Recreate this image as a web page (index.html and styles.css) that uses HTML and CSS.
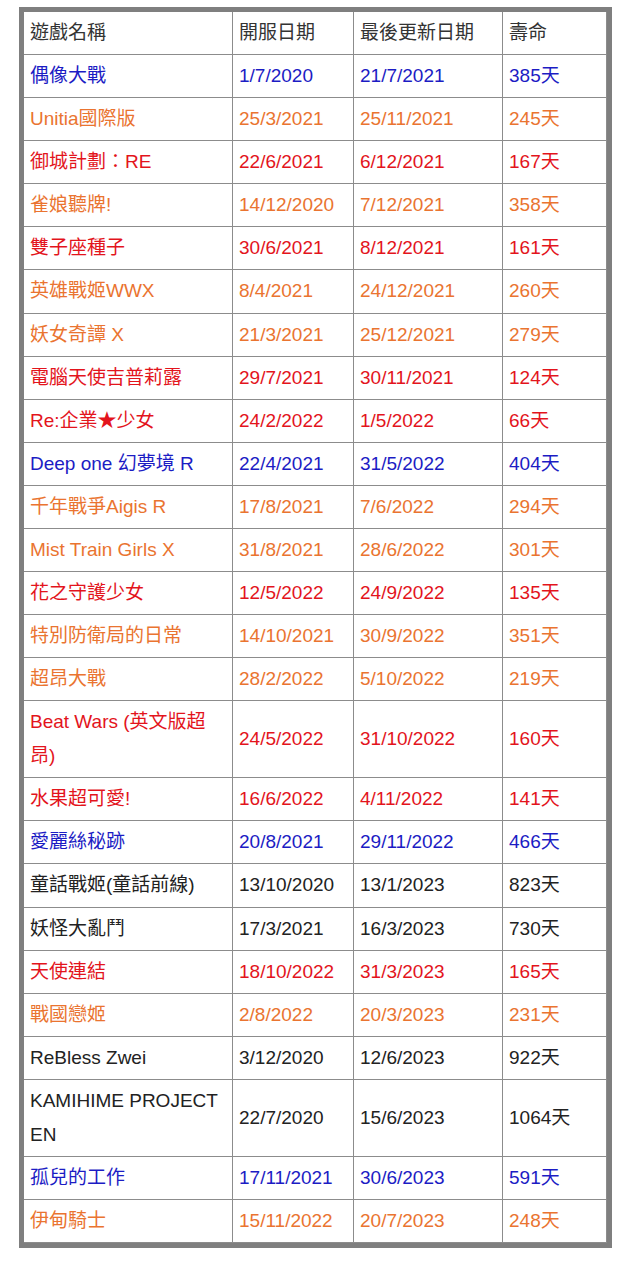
FILE: index.html
```html
<!DOCTYPE html>
<html lang="zh-Hant">
<head>
<meta charset="utf-8">
<title>遊戲壽命</title>
<link rel="stylesheet" href="styles.css">
</head>
<body>
<div class="frame">
<table class="games">
<colgroup>
<col class="c1"><col class="c2"><col class="c3"><col class="c4">
</colgroup>
<thead>
<tr class="k"><th>遊戲名稱</th><th>開服日期</th><th>最後更新日期</th><th>壽命</th></tr>
</thead>
<tbody>
<tr class="b"><td>偶像大戰</td><td>1/7/2020</td><td>21/7/2021</td><td>385天</td></tr>
<tr class="o"><td>Unitia國際版</td><td>25/3/2021</td><td>25/11/2021</td><td>245天</td></tr>
<tr class="r"><td>御城計劃：RE</td><td>22/6/2021</td><td>6/12/2021</td><td>167天</td></tr>
<tr class="o"><td>雀娘聽牌!</td><td>14/12/2020</td><td>7/12/2021</td><td>358天</td></tr>
<tr class="r"><td>雙子座種子</td><td>30/6/2021</td><td>8/12/2021</td><td>161天</td></tr>
<tr class="o"><td>英雄戰姬WWX</td><td>8/4/2021</td><td>24/12/2021</td><td>260天</td></tr>
<tr class="o"><td>妖女奇譚 X</td><td>21/3/2021</td><td>25/12/2021</td><td>279天</td></tr>
<tr class="r"><td>電腦天使吉普莉露</td><td>29/7/2021</td><td>30/11/2021</td><td>124天</td></tr>
<tr class="r"><td>Re:企業★少女</td><td>24/2/2022</td><td>1/5/2022</td><td>66天</td></tr>
<tr class="b"><td>Deep one 幻夢境 R</td><td>22/4/2021</td><td>31/5/2022</td><td>404天</td></tr>
<tr class="o"><td>千年戰爭Aigis R</td><td>17/8/2021</td><td>7/6/2022</td><td>294天</td></tr>
<tr class="o"><td>Mist Train Girls X</td><td>31/8/2021</td><td>28/6/2022</td><td>301天</td></tr>
<tr class="r"><td>花之守護少女</td><td>12/5/2022</td><td>24/9/2022</td><td>135天</td></tr>
<tr class="o"><td>特別防衛局的日常</td><td>14/10/2021</td><td>30/9/2022</td><td>351天</td></tr>
<tr class="o"><td>超昂大戰</td><td>28/2/2022</td><td>5/10/2022</td><td>219天</td></tr>
<tr class="r"><td>Beat Wars (英文版超昂)</td><td>24/5/2022</td><td>31/10/2022</td><td>160天</td></tr>
<tr class="r"><td>水果超可愛!</td><td>16/6/2022</td><td>4/11/2022</td><td>141天</td></tr>
<tr class="b"><td>愛麗絲秘跡</td><td>20/8/2021</td><td>29/11/2022</td><td>466天</td></tr>
<tr class="k"><td>童話戰姬(童話前線)</td><td>13/10/2020</td><td>13/1/2023</td><td>823天</td></tr>
<tr class="k"><td>妖怪大亂鬥</td><td>17/3/2021</td><td>16/3/2023</td><td>730天</td></tr>
<tr class="r"><td>天使連結</td><td>18/10/2022</td><td>31/3/2023</td><td>165天</td></tr>
<tr class="o"><td>戰國戀姬</td><td>2/8/2022</td><td>20/3/2023</td><td>231天</td></tr>
<tr class="k"><td>ReBless Zwei</td><td>3/12/2020</td><td>12/6/2023</td><td>922天</td></tr>
<tr class="k"><td>KAMIHIME PROJECT EN</td><td>22/7/2020</td><td>15/6/2023</td><td>1064天</td></tr>
<tr class="b"><td>孤兒的工作</td><td>17/11/2021</td><td>30/6/2023</td><td>591天</td></tr>
<tr class="o"><td>伊甸騎士</td><td>15/11/2022</td><td>20/7/2023</td><td>248天</td></tr>
</tbody>
</table>
</div>
</body>
</html>
```
FILE: styles.css
```css
html, body {
  margin: 0;
  padding: 0;
  background: #ffffff;
}

body {
  font-family: "Liberation Sans", "Noto Sans CJK TC", sans-serif;
  font-size: 19px;
}

.frame {
  margin: 7px 0 0 19px;
  width: 583px;
  border: 5px solid #7f7f7f;
}

.games {
  width: 583px;
  table-layout: fixed;
  border-collapse: separate;
  border-spacing: 0;
}

.c1 { width: 209px; }
.c2 { width: 121px; }
.c3 { width: 149px; }
.c4 { width: 104px; }

.games th,
.games td {
  box-sizing: border-box;
  padding: 4px 6px 4.08px;
  line-height: 34px;
  text-align: left;
  font-weight: normal;
  vertical-align: middle;
  border-right: 1px solid #8c8c8c;
  border-bottom: 1px solid #8c8c8c;
}

.games th { color: #333333; }

.b { color: #1c1cc4; }
.o { color: #ea7430; }
.r { color: #e3141c; }
.k { color: #222222; }
```
